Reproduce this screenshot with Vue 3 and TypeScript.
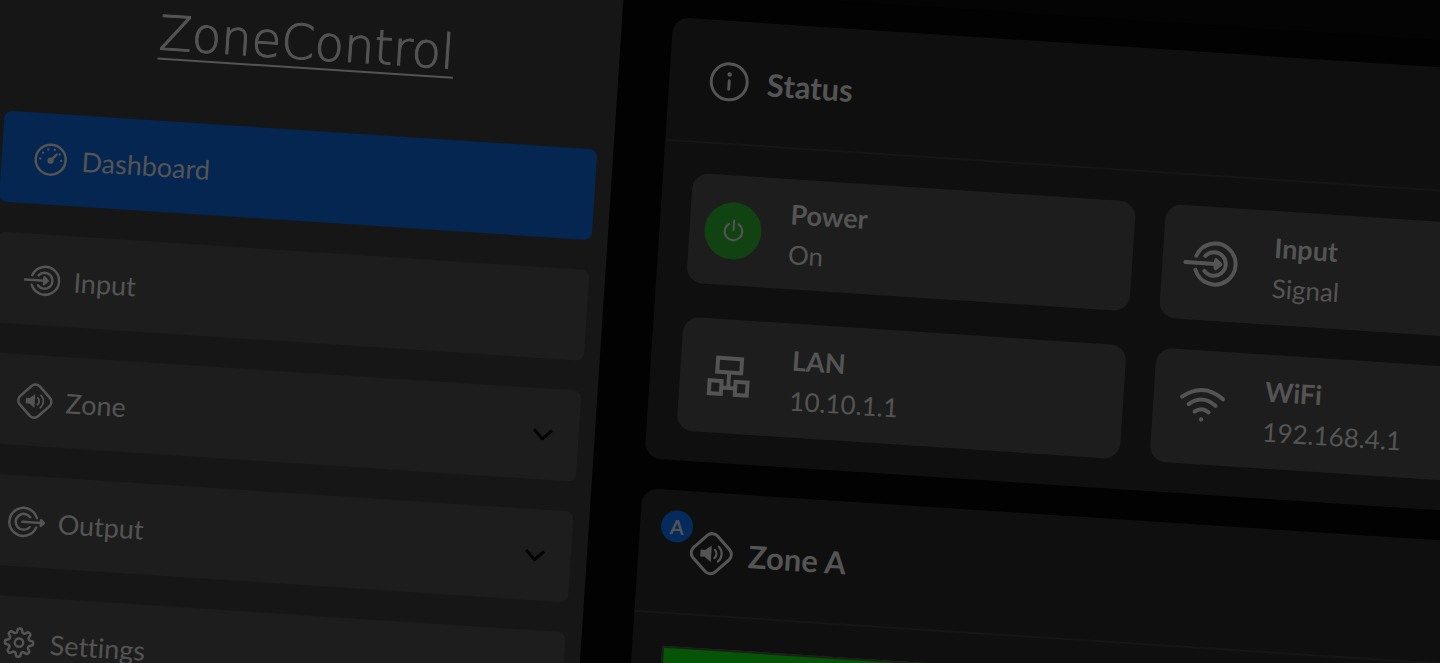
<script setup lang="ts">
type IconName = 'gauge' | 'input' | 'zone' | 'output' | 'settings'

interface NavItem {
  label: string
  icon: IconName
  active?: boolean
  expandable?: boolean
}

interface StatusCard {
  title: string
  value: string
  icon: 'power' | 'input' | 'lan' | 'wifi'
}

const navItems: NavItem[] = [
  { label: 'Dashboard', icon: 'gauge', active: true },
  { label: 'Input', icon: 'input' },
  { label: 'Zone', icon: 'zone', expandable: true },
  { label: 'Output', icon: 'output', expandable: true },
  { label: 'Settings', icon: 'settings' },
]

const cards: StatusCard[] = [
  { title: 'Power', value: 'On', icon: 'power' },
  { title: 'Input', value: 'Signal', icon: 'input' },
  { title: 'LAN', value: '10.10.1.1', icon: 'lan' },
  { title: 'WiFi', value: '192.168.4.1', icon: 'wifi' },
]

// Outline of the settings cog: eight rounded teeth around the centre.
const cogPath = ((): string => {
  const points: string[] = []
  for (let i = 0; i <= 96; i++) {
    const a = (i / 96) * Math.PI * 2
    const wave = Math.tanh(2.2 * Math.cos(8 * a)) / Math.tanh(2.2)
    const r = 12.2 + 1.9 * wave
    points.push(`${(19 + r * Math.sin(a)).toFixed(2)} ${(19 - r * Math.cos(a)).toFixed(2)}`)
  }
  return `M${points.join('L')}Z`
})()
</script>

<template>
  <div class="viewport">
    <div class="stage">
      <aside class="sidebar">
        <div class="brand"><span class="brand-name">ZoneControl</span></div>
        <nav class="nav">
          <a
            v-for="item in navItems"
            :key="item.label"
            href="#"
            class="nav-item"
            :class="{ active: item.active }"
          >
            <svg class="nav-icon" viewBox="0 0 38 38" aria-hidden="true">
              <g v-if="item.icon === 'gauge'">
                <circle cx="19" cy="19" r="15" class="line" />
                <circle cx="19" cy="20" r="3.2" class="fill" />
                <path d="M19.5 19.5L24.5 13.5" class="line" />
                <g class="fill">
                  <circle cx="8.5" cy="18.5" r="1.2" />
                  <circle cx="11" cy="12.5" r="1.2" />
                  <circle cx="16" cy="9" r="1.2" />
                  <circle cx="22.5" cy="9" r="1.2" />
                  <circle cx="27.7" cy="13.2" r="1.2" />
                  <circle cx="29.6" cy="19.5" r="1.2" />
                </g>
              </g>
              <g v-else-if="item.icon === 'input'" class="line">
                <path d="M8.2 14.5A14 14 0 1 1 8.2 24" />
                <path d="M14.5 14.2A8 8 0 1 1 14.5 24.2" />
                <path d="M1 19.2H22" />
                <path d="M20.5 15.8L24 19.2L20.5 22.6Z" class="fill" />
              </g>
              <g v-else-if="item.icon === 'zone'">
                <rect x="5.5" y="5.5" width="27" height="27" rx="6" transform="rotate(45 19 19)" class="line" />
                <path d="M10 16.2h3.6l5.4-4v13.6l-5.4-4H10z" class="fill" />
                <path d="M21.8 15.6a4.6 4.6 0 0 1 0 6.8M24.8 12.8a8.4 8.4 0 0 1 0 12.4" class="line thin" />
              </g>
              <g v-else-if="item.icon === 'output'" class="line">
                <path d="M28.6 14.5A14 14 0 1 0 28.6 24" />
                <path d="M22 14.2A8 8 0 1 0 22 24.2" />
                <path d="M14.5 19.2H35" />
                <path d="M33 16.4L36 19.2L33 22Z" class="fill" />
              </g>
              <g v-else class="line">
                <path :d="cogPath" />
                <circle cx="19" cy="19" r="4.2" />
              </g>
            </svg>
            <span>{{ item.label }}</span>
            <svg v-if="item.expandable" class="chevron" viewBox="0 0 20 12" aria-hidden="true">
              <path d="M1 1.5L10 10.5L19 1.5" />
            </svg>
          </a>
        </nav>
      </aside>

      <div class="content">
        <header class="topbar"></header>
        <main class="panels">
          <section class="panel">
            <header class="panel-head">
              <svg class="info-icon" viewBox="0 0 40 40" aria-hidden="true">
                <circle cx="20" cy="20" r="18" class="line" />
                <circle cx="20" cy="12.6" r="2.3" class="fill" />
                <path d="M20 19V27.4" class="line" />
              </svg>
              <h2>Status</h2>
            </header>
            <div class="cards">
              <article v-for="card in cards" :key="card.title" class="card" :class="card.icon">
                <button v-if="card.icon === 'power'" type="button" class="power-button" aria-label="Power">
                  <svg viewBox="0 0 24 24" aria-hidden="true">
                    <path d="M7.2 5.6A8.8 8.8 0 1 0 16.8 5.6M12 2V11.5" />
                  </svg>
                </button>
                <svg v-else-if="card.icon === 'input'" class="card-icon" viewBox="0 0 68 56" aria-hidden="true">
                  <g class="line heavy">
                    <path d="M18.5 21A20.5 20.5 0 1 1 18.5 35" />
                    <path d="M27.5 20.5A11.8 11.8 0 1 1 27.5 35.5" />
                    <path d="M8 28H42" />
                    <path d="M38.5 24L43 28L38.5 32Z" class="fill" />
                  </g>
                </svg>
                <svg v-else-if="card.icon === 'lan'" class="card-icon" viewBox="0 0 68 56" aria-hidden="true">
                  <g class="line lan-line">
                    <rect x="22" y="10" width="24" height="14" />
                    <rect x="15" y="33" width="12" height="13" />
                    <rect x="41" y="33" width="12" height="13" />
                    <path d="M34 24V39.5M27 39.5H41" />
                  </g>
                </svg>
                <svg v-else class="card-icon" viewBox="0 0 68 56" aria-hidden="true">
                  <g class="line heavy">
                    <path d="M13.5 18.5Q34 2.5 54.5 18.5" />
                    <path d="M20.5 25.5Q34 14.5 47.5 25.5" />
                    <path d="M27 32.5Q34 27 41 32.5" />
                  </g>
                  <circle cx="34" cy="40" r="2.2" class="fill" />
                </svg>
                <div class="card-text">
                  <h3>{{ card.title }}</h3>
                  <p>{{ card.value }}</p>
                </div>
              </article>
            </div>
          </section>

          <section class="panel">
            <header class="panel-head zone-head">
              <span class="badge">A</span>
              <svg class="zone-icon" viewBox="0 0 38 38" aria-hidden="true">
                <rect x="5.5" y="5.5" width="27" height="27" rx="6" transform="rotate(45 19 19)" class="line" />
                <path d="M10 16.2h3.6l5.4-4v13.6l-5.4-4H10z" class="fill" />
                <path d="M21.8 15.6a4.6 4.6 0 0 1 0 6.8M24.8 12.8a8.4 8.4 0 0 1 0 12.4" class="line thin" />
              </svg>
              <h2>Zone A</h2>
            </header>
            <div class="zone-body">
              <div class="level"></div>
            </div>
          </section>
        </main>
      </div>
    </div>
  </div>
</template>

<style>
body {
  margin: 0;
  background: #020202;
}
</style>

<style scoped>
.viewport {
  height: 100vh;
  overflow: hidden;
  font-family: Lato, "Liberation Sans", sans-serif;
  font-variant-ligatures: none;
  color: #545454;
}

.stage {
  display: grid;
  grid-template-columns: 622px 1fr;
  width: calc(100vw + 264px);
  min-height: calc(100vh + 140px);
  transform-origin: 0 0;
  transform: rotate(3.75deg) translateY(-100px);
}

.sidebar {
  box-sizing: border-box;
  padding: 100px 16px 0 12px;
  background: #161616;
}

.brand {
  display: flex;
  justify-content: center;
  height: 110px;
}

.brand-name {
  height: 47px;
  border-bottom: 2px solid #545454;
  font-family: "DejaVu Sans", sans-serif;
  font-size: 48px;
  font-weight: 200;
  line-height: 44px;
  -webkit-text-stroke: 1px #545454;
}

.nav {
  display: flex;
  flex-direction: column;
  gap: 30px;
}

.nav-item {
  display: flex;
  align-items: center;
  gap: 12px;
  box-sizing: border-box;
  height: 91px;
  padding: 0 26px 0 30px;
  border-radius: 8px;
  background: #1d1d1d;
  color: inherit;
  font-size: 27px;
  text-decoration: none;
}

.nav-item.active {
  background: #042650;
}

.nav-icon {
  width: 38px;
  height: 38px;
}

.chevron {
  width: 20px;
  height: 12px;
  margin-left: auto;
  fill: none;
  stroke: #030303;
  stroke-width: 3;
}

.line {
  fill: none;
  stroke: #545454;
  stroke-width: 2.5;
  stroke-linecap: round;
  stroke-linejoin: round;
}

.line.thin {
  stroke-width: 1.8;
}

.line.heavy {
  stroke-width: 4;
}

.line.lan-line {
  stroke-width: 4;
  stroke-linejoin: miter;
  stroke-linecap: butt;
}

.fill {
  fill: #545454;
}

.topbar {
  height: 46px;
  background: #040404;
}

.panels {
  display: flex;
  flex-direction: column;
  gap: 30px;
  padding: 27px 53px 0 51px;
}

.panel {
  border-radius: 16px;
  background: #0f0f0f;
}

.panel-head {
  position: relative;
  display: flex;
  align-items: center;
  gap: 18px;
  height: 122px;
  padding-left: 40px;
  border-bottom: 2px solid #161616;
}

.zone-head {
  gap: 14px;
  padding-left: 50px;
}

h2,
h3,
p {
  margin: 0;
}

h2 {
  font-size: 31px;
  font-weight: 700;
}

.info-icon {
  width: 40px;
  height: 40px;
}

.info-icon .line {
  stroke-width: 3;
}

.zone-icon {
  width: 46px;
  height: 46px;
}

.badge {
  position: absolute;
  top: 20px;
  left: 21px;
  width: 32px;
  height: 32px;
  border-radius: 50%;
  background: #042b5c;
  font-size: 20px;
  font-weight: 700;
  line-height: 32px;
  text-align: center;
}

.cards {
  display: grid;
  grid-template-columns: 1fr 1fr;
  gap: 30px;
  padding: 30px;
}

.card {
  display: flex;
  align-items: center;
  gap: 28px;
  box-sizing: border-box;
  height: 114px;
  padding: 0 15px;
  border-radius: 16px;
  background: #1d1d1d;
}

.card.power {
  height: 110px;
}

.card-icon {
  width: 68px;
  height: 56px;
}

.power-button {
  display: flex;
  align-items: center;
  justify-content: center;
  width: 57px;
  height: 57px;
  padding: 0;
  border: 0;
  border-radius: 50%;
  background: #114312;
}

.power-button svg {
  width: 24px;
  height: 24px;
  fill: none;
  stroke: #545454;
  stroke-width: 2;
  stroke-linecap: round;
}

.card-text {
  font-size: 26px;
  line-height: 40px;
}

h3 {
  font-size: 27px;
  font-weight: 700;
}

.zone-body {
  padding: 32px 30px;
}

.level {
  height: 120px;
  border: 2px solid #1d1d1d;
  background: #065406;
}
</style>
